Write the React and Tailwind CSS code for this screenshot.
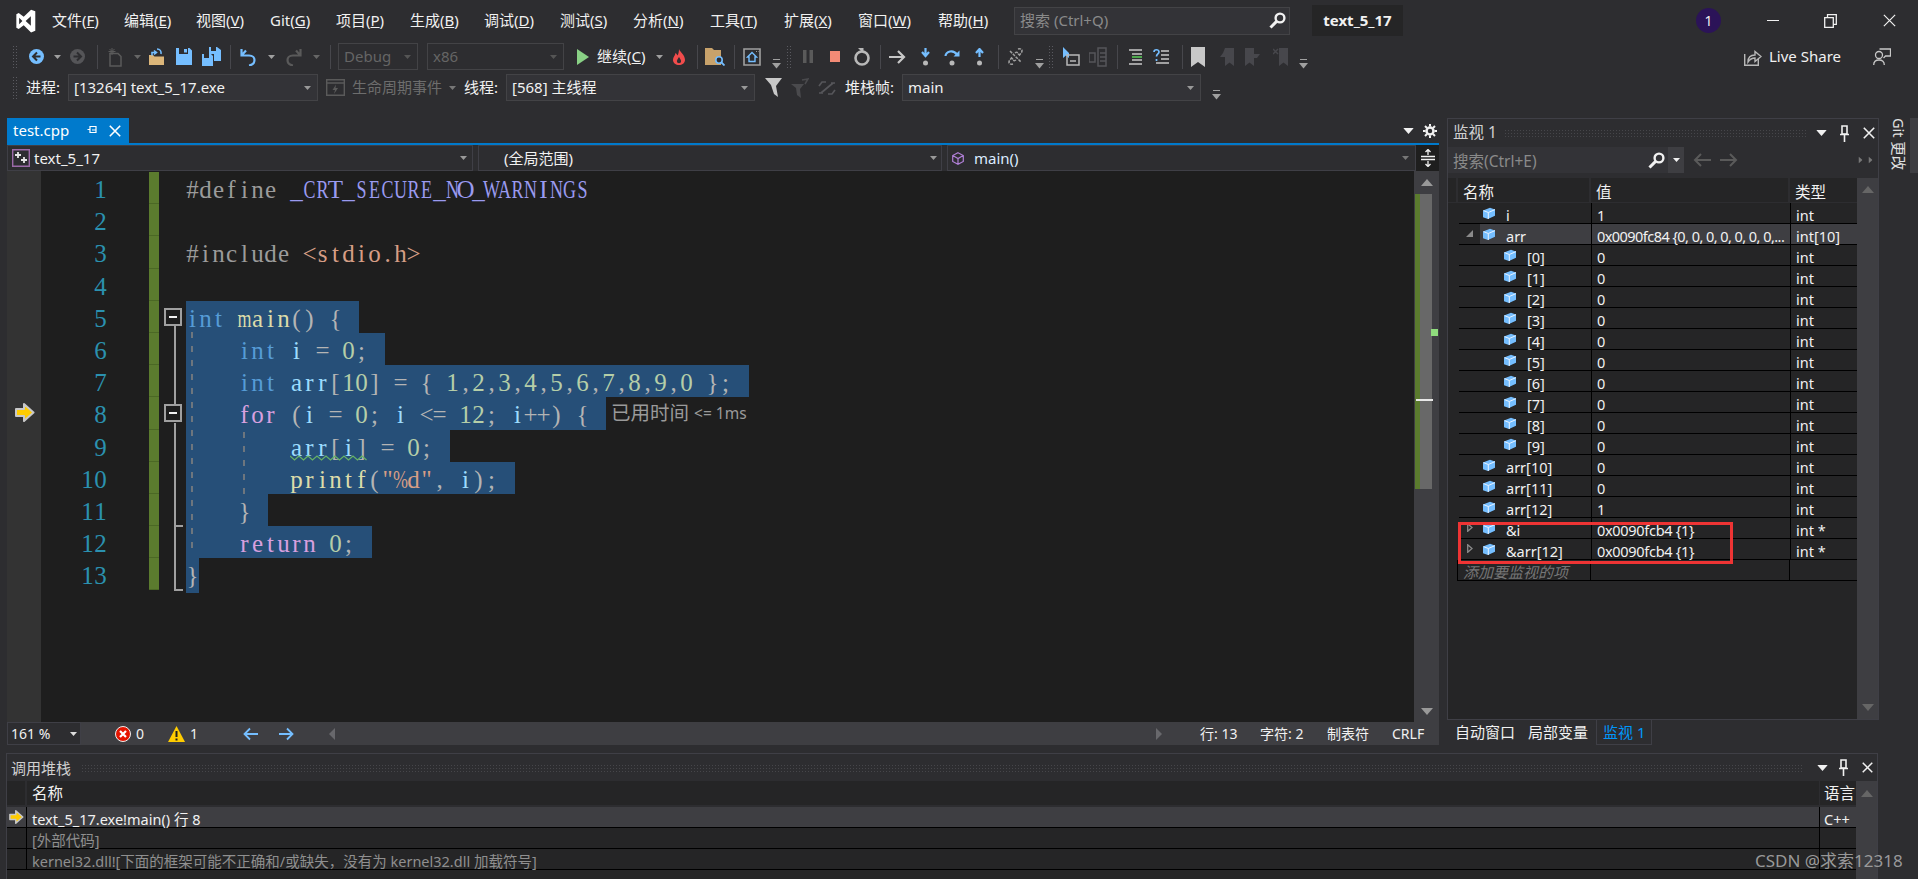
import React from 'react';

const Caret = ({ c = '#a0a0a0', cls = '' }) => (
  <svg width="7" height="4" viewBox="0 0 7 4" className={'shrink-0 ' + cls}><path d="M0 0h7L3.5 4z" fill={c} /></svg>
);
const Drop = ({ cls = '' }) => (
  <svg width="9" height="10" viewBox="0 0 9 10" className={'shrink-0 mt-[14px] ' + cls}><path d="M1 .5h7" stroke="#a0a0a0" /><path d="M0 4h9L4.5 9.5z" fill="#a0a0a0" /></svg>
);
const Grip = ({ cls = '' }) => (
  <div className={'shrink-0 w-[6px] h-[24px] bg-[radial-gradient(#5a5a60_1px,transparent_1px)] bg-[length:3px_3px] ' + cls} />
);
const Sep = ({ cls = '' }) => <div className={'shrink-0 w-px h-[24px] bg-[#47474c] ' + cls} />;
const Ico = ({ w, h, vb, cls = '', children }) => (
  <svg width={w} height={h} viewBox={vb || `0 0 ${w} ${h}`} className={'shrink-0 ' + cls} fill="none">{children}</svg>
);

const Cube = ({ cls = '' }) => (
  <svg width="14" height="13" viewBox="0 0 14 13" className={'shrink-0 ' + cls}>
    <path d="M1 3.5 8 .8l5 1.6v6.4L6 12 1 10.2z" fill="#75beff" />
    <path d="M1.5 3.6 6.3 5.5 13 2.6M6.3 5.5V12" stroke="#e8f3ff" strokeWidth="1" fill="none" />
  </svg>
);
const Arrow = ({ cls = '', w = 20, h = 19 }) => (
  <svg width={w} height={h} viewBox="0 0 20 19" className={'shrink-0 ' + cls}>
    <path d="M1 6h8V1l9.5 8.5L9 18v-5H1z" fill="#ffcc00" stroke="#c8c8c8" strokeWidth="2" strokeLinejoin="round" />
  </svg>
);
const PinIcon = ({ cls = '' }) => (
  <svg width="11" height="17" viewBox="0 0 11 17" className={'shrink-0 ' + cls} fill="none">
    <path d="M3 1h5v8H3z" stroke="#f1f1f1" strokeWidth="1.6" /><path d="M1 9.5h9M5.5 10v7" stroke="#f1f1f1" strokeWidth="1.6" />
  </svg>
);
const XIcon = ({ cls = '', s = 12, c = '#f1f1f1', sw = 1.6 }) => (
  <svg width={s} height={s} viewBox="0 0 12 12" className={'shrink-0 ' + cls}><path d="M.8.8l10.4 10.4M11.2.8.8 11.2" stroke={c} strokeWidth={sw} /></svg>
);
const Lens = ({ cls = '' }) => (
  <svg width="17" height="17" viewBox="0 0 17 17" className={'shrink-0 ' + cls} fill="none">
    <circle cx="11" cy="6" r="4.4" stroke="#f1f1f1" strokeWidth="2.4" /><path d="M7.6 9.4 1.5 15.5" stroke="#f1f1f1" strokeWidth="3" />
  </svg>
);

const menu = [
  ['文件(', 'F', ')', 'w-[72px]'], ['编辑(', 'E', ')', 'w-[72px]'], ['视图(', 'V', ')', 'w-[74px]'], ['Git(', 'G', ')', 'w-[66px]'],
  ['项目(', 'P', ')', 'w-[74px]'], ['生成(', 'B', ')', 'w-[74px]'], ['调试(', 'D', ')', 'w-[76px]'], ['测试(', 'S', ')', 'w-[73px]'],
  ['分析(', 'N', ')', 'w-[77px]'], ['工具(', 'T', ')', 'w-[74px]'], ['扩展(', 'X', ')', 'w-[74px]'], ['窗口(', 'W', ')', 'w-[80px]'], ['帮助(', 'H', ')', 'w-[76px]'],
];

const C = {
  kw: 'text-[#569cd6]', fn: 'text-[#dcdcaa]', v: 'text-[#9cdcfe]', n: 'text-[#b5cea8]', p: 'text-[#b4b4b4]',
  pre: 'text-[#9b9b9b]', mac: 'text-[#9a9af0]', str: 'text-[#d69d85]', ctl: 'text-[#d8a0df]',
};
const WIDE = 'WMNRCUSEGA%m';
const Glyph = ({ ch }) => (
  <span className={WIDE.includes(ch) ? 'inline-flex justify-center w-[13px] scale-x-[0.72]' : 'inline-flex justify-center w-[13px]'}>{ch === ' ' ? '\u00a0' : ch}</span>
);
const Mono = ({ text, cls = '' }) => <span className={'inline-flex whitespace-pre ' + cls}>{[...text].map((ch, i) => <Glyph key={i} ch={ch} />)}</span>;

const lines = [
  { t: [['#define ', C.pre], ['_CRT_SECURE_NO_WARNINGS', C.mac]] },
  { t: [] },
  { t: [['#include ', C.pre], ['<stdio.h>', C.str]] },
  { t: [] },
  { sel: 1, box: 1, t: [['int', C.kw], [' ', C.p], ['main', C.fn], ['() {', C.p]] },
  { sel: 1, t: [['    ', C.p], ['int', C.kw], [' ', C.p], ['i', C.v], [' = ', C.p], ['0', C.n], [';', C.p]] },
  { sel: 1, t: [['    ', C.p], ['int', C.kw], [' ', C.p], ['arr', C.v], ['[', C.p], ['10', C.n], ['] = { ', C.p], ['1', C.n], [',', C.p], ['2', C.n], [',', C.p], ['3', C.n], [',', C.p], ['4', C.n], [',', C.p], ['5', C.n], [',', C.p], ['6', C.n], [',', C.p], ['7', C.n], [',', C.p], ['8', C.n], [',', C.p], ['9', C.n], [',', C.p], ['0', C.n], [' };', C.p]] },
  { sel: 1, box: 1, hint: 1, t: [['    ', C.p], ['for', C.ctl], [' (', C.p], ['i', C.v], [' = ', C.p], ['0', C.n], ['; ', C.p], ['i', C.v], [' <= ', C.p], ['12', C.n], ['; ', C.p], ['i', C.v], ['++) {', C.p]] },
  { sel: 1, t: [['        ', C.p], ['arr', C.v], ['[', C.p], ['i', C.v], ['] = ', C.p], ['0', C.n], [';', C.p]] },
  { sel: 1, t: [['        ', C.p], ['printf', C.fn], ['(', C.p], ['"%d"', C.str], [', ', C.p], ['i', C.v], [');', C.p]] },
  { sel: 1, t: [['    }', C.p]] },
  { sel: 1, t: [['    ', C.p], ['return', C.ctl], [' ', C.p], ['0', C.n], [';', C.p]] },
  { sel: 2, t: [['}', C.p]] },
];

const watch = [
  { n: 'i', v: '1', ty: 'int' },
  { n: 'arr', v: '0x0090fc84 {0, 0, 0, 0, 0, 0, 0,...', ty: 'int[10]', exp: 'open', selected: 1 },
  ...[0, 1, 2, 3, 4, 5, 6, 7, 8, 9].map((k) => ({ n: `[${k}]`, v: '0', ty: 'int', sub: 1 })),
  { n: 'arr[10]', v: '0', ty: 'int' },
  { n: 'arr[11]', v: '0', ty: 'int' },
  { n: 'arr[12]', v: '1', ty: 'int' },
  { n: '&i', v: '0x0090fcb4 {1}', ty: 'int *', exp: 'closed' },
  { n: '&arr[12]', v: '0x0090fcb4 {1}', ty: 'int *', exp: 'closed' },
];

const Combo = ({ w, text, dim }) => (
  <div className={`shrink-0 flex items-center h-[27px] border ${w} ${dim ? 'border-[#434346] text-[#656565]' : 'border-[#434346] bg-[#333337] text-[#f1f1f1]'}`}>
    <span className="pl-[5px] flex-1 whitespace-pre">{text}</span>
    <Caret c={dim ? '#555555' : '#999999'} cls="mr-[6px]" />
  </div>
);

function Title() {
  return (
    <div className="flex items-center h-[41px] shrink-0 text-[15px]">
      <svg width="26" height="26" viewBox="0 0 24 24" className="ml-[12px] shrink-0">
        <path fill="#ffffff" fillRule="evenodd" d="M17.6 1.5 10.8 8 6.2 4.6 4 5.7v12.6l2.2 1.1 4.6-3.4 6.8 6.5L21.5 21V3zM6.6 9l3 3-3 3zM17.4 7.6v8.8L12.6 12z" />
      </svg>
      <div className="flex ml-[14px]">
        {menu.map(([a, b, c, w]) => (
          <span key={b} className={`${w} text-[#f1f1f1] whitespace-pre`}>{a}<u>{b}</u>{c}</span>
        ))}
      </div>
      <div className="flex items-center justify-between w-[276px] h-[28px] border border-[#434346] bg-[#333337] pl-[5px] pr-[3px] text-[#8a8a8a]">
        <span>搜索 (Ctrl+Q)</span><Lens />
      </div>
      <div className="ml-[22px] flex items-center justify-center w-[91px] h-[31px] bg-[#252526] font-bold text-[#f1f1f1]">text_5_17</div>
      <div className="ml-[293px] flex items-center justify-center w-[25px] h-[25px] rounded-full bg-[#2b1358] text-[#f1f1f1] text-[14px]">1</div>
      <div className="ml-[46px] w-[12px] h-px bg-[#f1f1f1]" />
      <svg width="13" height="14" viewBox="0 0 13 14" className="ml-[45px] shrink-0" fill="none"><path d="M.7 3.7h8.6v9.6H.7zM3.5 3.5V.7h8.8v9.6H9.5" stroke="#f1f1f1" strokeWidth="1.3" /></svg>
      <XIcon s={13} sw={1.1} cls="ml-[46px]" />
    </div>
  );
}

function Toolbar1() {
  return (
    <div className="flex items-center h-[31px] shrink-0 text-[15px] text-[#f1f1f1]">
      <Grip cls="ml-[12px]" />
      <Ico w={15} h={15} cls="ml-[11px]"><circle cx="7.5" cy="7.5" r="7.5" fill="#75beff" /><path d="M8 3.5 4 7.5l4 4M4.5 7.5h7" stroke="#2d2d30" strokeWidth="2" /></Ico>
      <Caret cls="ml-[10px]" />
      <Ico w={15} h={15} cls="ml-[9px]"><circle cx="7.5" cy="7.5" r="7.5" fill="#555558" /><path d="m7 3.5 4 4-4 4M3.5 7.5h7" stroke="#2d2d30" strokeWidth="2" /></Ico>
      <Sep cls="ml-[12px]" />
      <Ico w={16} h={20} cls="ml-[9px]"><path d="M3 6.5h8l3 3v9.5H3z" stroke="#5a5a5a" strokeWidth="1.5" /><path d="M5 1v7M1.5 4.5h7M2.5 2l5 5M7.5 2l-5 5" stroke="#5a5a5a" /></Ico>
      <Caret c="#666" cls="ml-[11px]" />
      <Ico w={18} h={18} cls="ml-[7px]"><path d="M1 7h4l1.500 1.500H16V17H1z" fill="#dcb67a" /><path d="M4 7.500V4.500h4M6 2.500l2.500 2L6 6.500" stroke="#75beff" strokeWidth="1.600" /><path d="M9 1c3 0 4.500 2 4 5" stroke="#75beff" strokeWidth="1.600" /></Ico>
      <Ico w={16} h={17} cls="ml-[10px]"><path d="M0 0h3v6h9V0h1.500L16 2.500V17H0z" fill="#75beff" /><path d="M8 1h3v3.500H8z" fill="#75beff" /></Ico>
      <Ico w={19} h={19} cls="ml-[10px]"><path d="M7 0h2v4h5V0h1l4 3v11h-7V7H7z" fill="#75beff" /><path d="M0 7h2v4h5V7h2l2 2v10H0z" fill="#75beff" /></Ico>
      <Sep cls="ml-[9px]" />
      <Ico w={16} h={18} cls="ml-[9px]"><path d="M1.500 1v6.500H9c4 0 5.500 2.500 5.500 4.500 0 3-2.500 5-5.500 5.500M1.500 7.500 6 2.500" stroke="#75beff" strokeWidth="2.200" /></Ico>
      <Caret cls="ml-[12px]" />
      <Ico w={16} h={18} cls="ml-[11px]"><path d="M14.500 1v6.500H7C3 7.500 1.500 10 1.500 12c0 3 2.500 5 5.500 5.500M14.500 7.500 10 2.500" stroke="#5a5a5a" strokeWidth="2.200" /></Ico>
      <Caret c="#666" cls="ml-[11px]" />
      <Sep cls="ml-[10px]" />
      <div className="ml-[7px]"><Combo w="w-[80px]" text="Debug" dim /></div>
      <div className="ml-[9px]"><Combo w="w-[137px]" text="x86" dim /></div>
      <Ico w={12} h={16} cls="ml-[13px]"><path d="M0 0l12 8-12 8z" fill="#89d185" /></Ico>
      <span className="ml-[8px] w-[52px] whitespace-pre">继续(<u>C</u>)</span>
      <Caret cls="ml-[7px]" />
      <Ico w={12} h={16} cls="ml-[10px]"><path d="M6 0c1 3 6 6 6 11 0 3-3 5-6 5s-6-2-6-5c0-3 2-4 2.500-7C4 5 4 6 4.500 6.500 5.500 5 6 2 6 0z" fill="#f14c4c" /><path d="M6 8c1 2 2.500 3 2 5-.5 1.500-3.500 1.500-4 0C3.500 11 5 10 6 8z" fill="#2d2d30" /></Ico>
      <Sep cls="ml-[12px]" />
      <Ico w={20} h={19} cls="ml-[7px]"><path d="M0 1h7l2 2h7v15H0z" fill="#c8a26b" /><circle cx="14" cy="13" r="3.200" stroke="#75beff" strokeWidth="1.600" fill="#2d2d30" /><path d="m16.500 15.500 3 3" stroke="#75beff" strokeWidth="1.800" /></Ico>
      <Sep cls="ml-[9px]" />
      <Ico w={18} h={18} cls="ml-[8px]"><path d="M1 1h16v16H1z" stroke="#a0a0a0" strokeWidth="1.600" /><path d="M9 4.500 4.500 9H6v4.500h6V9h1.500z" stroke="#75beff" strokeWidth="1.400" /><path d="M13 3.500h1M15 3.500h.5" stroke="#a0a0a0" /></Ico>
      <Drop cls="ml-[11px]" />
      <Grip cls="ml-[5px]" />
      <Ico w={10} h={13} cls="ml-[11px]"><path d="M0 0h3.500v13H0zM6.500 0H10v13H6.500z" fill="#5a5a5a" /></Ico>
      <div className="ml-[17px] w-[10px] h-[11px] bg-[#f38b76] shrink-0" />
      <Ico w={16} h={18} cls="ml-[14px]"><circle cx="8" cy="10" r="6.500" stroke="#b8b8b8" strokeWidth="2.600" /><path d="M4 0h5.500v5.500z" fill="#b8b8b8" /></Ico>
      <Sep cls="ml-[10px]" />
      <Ico w={17} h={14} cls="ml-[8px]"><path d="M0 7h15M9 1l6 6-6 6" stroke="#c8c8c8" strokeWidth="2.200" /></Ico>
      <Ico w={9} h={18} cls="ml-[15px]"><path d="M4.500 0v7M1 4l3.500 4L8 4" stroke="#75beff" strokeWidth="2.200" /><circle cx="4.500" cy="15" r="2.500" fill="#b8b8b8" /></Ico>
      <Ico w={16} h={18} cls="ml-[14px]"><path d="M1.500 8C2 3.500 9 1 13 6.500" stroke="#75beff" strokeWidth="2.200" /><path d="M15.500 2.500v6h-6z" fill="#75beff" /><circle cx="8" cy="15" r="2.500" fill="#b8b8b8" /></Ico>
      <Ico w={9} h={18} cls="ml-[15px]"><path d="M4.500 9V2M1 5l3.500-4L8 5" stroke="#75beff" strokeWidth="2.200" /><circle cx="4.500" cy="15" r="2.500" fill="#b8b8b8" /></Ico>
      <Sep cls="ml-[14px]" />
      <Ico w={17} h={19} cls="ml-[8px]"><path d="M11 2c3-1 5 1 3.500 3.500l-3 4M6 17c-3 1-5-1-3.500-3.500l3-4M8 6c2-1.500 4 0 3.500 2M9 13c-2 1.500-4 0-3.500-2M3 4l11 11" stroke="#a0a0a0" strokeWidth="1.500" strokeDasharray="3 1" /></Ico>
      <Drop cls="ml-[11px]" />
      <Grip cls="ml-[4px]" />
      <Ico w={17} h={20} cls="ml-[9px]"><path d="M0 0v11l3-2.500L6 11V6z" fill="#75beff" /><path d="M4 8h12v10H4zM7 14h6" stroke="#b8b8b8" strokeWidth="1.500" /></Ico>
      <Ico w={18} h={20} cls="ml-[9px]"><path d="M0 6h6v9H0zM9 1h8v18H9zM11 6h6M11 10h6M11 14h6" stroke="#55555a" strokeWidth="1.500" /></Ico>
      <Sep cls="ml-[10px]" />
      <Ico w={13} h={16} cls="ml-[11px]"><path d="M0 1h13M3 5h10M3 11h10M0 15h13" stroke="#c8c8c8" strokeWidth="1.500" /><path d="M3 7h10v2H3z" fill="#4ea84e" /></Ico>
      <Ico w={16} h={17} cls="ml-[11px]"><path d="M1 4c0-3 5-3 5 0 0 2-2.500 2-2.500 4.500M3.500 11v2" stroke="#75beff" strokeWidth="1.700" /><path d="M8 3h8M8 7h8M8 11h8M3 15h13" stroke="#c8c8c8" strokeWidth="1.500" /></Ico>
      <Sep cls="ml-[13px]" />
      <Ico w={14} h={20} cls="ml-[8px]"><path d="M0 0h14v20l-7-5-7 5z" fill="#c8c8c8" /></Ico>
      <Ico w={14} h={18} cls="ml-[15px]"><path d="M5 0h9v18l-4.500-3.500L5 18V9H0l3-4z" fill="#47474c" /></Ico>
      <Ico w={15} h={18} cls="ml-[11px]"><path d="M0 0h9v6h6l-3 4H9v8l-4.500-3.500L0 18z" fill="#47474c" /></Ico>
      <Ico w={15} h={18} cls="ml-[13px]"><path d="M0 1l5 5M5 1 0 6" stroke="#47474c" strokeWidth="1.500" /><path d="M6 0h9v18l-4.500-3.500L6 18z" fill="#47474c" /></Ico>
      <Drop cls="ml-[11px]" />
      <div className="ml-auto flex items-center pr-[27px]">
        <Ico w={18} h={18}><path d="M.7 6v11.300h13.600V11" stroke="#b8b8b8" strokeWidth="1.400" /><path d="M4 14c0-5 3-7 7-7V3.500l6 5-6 5V10c-3 0-5 1-7 4z" stroke="#b8b8b8" strokeWidth="1.400" /></Ico>
        <span className="ml-[7px] w-[74px] whitespace-nowrap">Live Share</span>
        <Ico w={18} h={18} cls="ml-[30px]"><circle cx="6" cy="7" r="3.500" stroke="#c8c8c8" strokeWidth="1.300" /><path d="M.7 17c0-3.500 2-5 5.300-5s5.300 1.500 5.300 5M6.500 1h11v7h-5l-2 2" stroke="#c8c8c8" strokeWidth="1.300" /></Ico>
      </div>
    </div>
  );
}

function Toolbar2() {
  return (
    <div className="flex items-center h-[31px] shrink-0 text-[15px] text-[#f1f1f1]">
      <Grip cls="ml-[12px]" />
      <span className="ml-[8px] w-[34px] whitespace-nowrap">进程:</span>
      <div className="ml-[8px]"><Combo w="w-[250px]" text="[13264] text_5_17.exe" /></div>
      <Ico w={19} h={17} cls="ml-[8px]"><path d="M.7.7h17.600v15.600H.7zM.7 4h17.600" stroke="#5a5a5a" strokeWidth="1.400" /><path d="M10 5.500 6.500 11H9l-1 4 4-6H9.500z" fill="#5a5a5a" /></Ico>
      <span className="ml-[7px] w-[91px] whitespace-nowrap text-[#6d6d6d]">生命周期事件</span>
      <Caret c="#777" cls="ml-[6px]" />
      <span className="ml-[8px] w-[34px] whitespace-nowrap">线程:</span>
      <div className="ml-[8px]"><Combo w="w-[249px]" text="[568] 主线程" /></div>
      <Ico w={17} h={20} cls="ml-[10px]"><path d="M0 0h17l-6 8 2 11-4-3-3-9z" fill="#c8c8c8" /></Ico>
      <Ico w={18} h={20} cls="ml-[9px]"><path d="M0 6h13l-4 5 1 9-4-3-1-7z" fill="#4a4a4d" /><path d="M11 2l6-1-3 5" stroke="#4a4a4d" strokeWidth="1.500" /></Ico>
      <Ico w={18} h={14} cls="ml-[9px]"><path d="M1 5l3-4h4M17 9l-3 4h-4M3 12 15 2M1 12h4M13 2h4" stroke="#56565a" strokeWidth="1.700" /></Ico>
      <span className="ml-[9px] w-[49px] whitespace-nowrap">堆栈帧:</span>
      <div className="ml-[8px]"><Combo w="w-[299px]" text="main" /></div>
      <Drop cls="ml-[11px]" />
    </div>
  );
}

function DocTabs() {
  return (
    <div className="flex items-end h-[25px] shrink-0">
      <div className="flex items-center w-[122px] h-full bg-[#007acc] text-white text-[15px]">
        <span className="pl-[6px] w-[80px]">test.cpp</span>
        <Ico w={11} h={11}><path d="M3 1.500h6v6H3M.5 4.500H3M3 1v7M9 5H5" stroke="#fff" strokeWidth="1.200" /></Ico>
        <XIcon s={12} c="#fff" cls="ml-[11px]" />
      </div>
      <div className="ml-auto self-center flex items-center gap-[11px] pr-[2px]">
        <Caret c="#f1f1f1" cls="scale-150" />
        <svg width="14" height="14" viewBox="0 0 14 14" className="shrink-0"><circle cx="7" cy="7" r="3.500" fill="none" stroke="#f1f1f1" strokeWidth="2.500" /><path d="M7 0v2.500M7 11.500V14M0 7h2.500M11.500 7H14M2 2l2 2M10 10l2 2M12 2l-2 2M4 10l-2 2" stroke="#f1f1f1" strokeWidth="2" /></svg>
      </div>
    </div>
  );
}

function NavBar() {
  return (
    <div className="flex h-[26px] shrink-0 text-[15px] text-[#f1f1f1]">
      <div className="flex items-center w-[466px] border border-[#3f3f46] bg-[#2d2d30]">
        <Ico w={18} h={18} cls="ml-[4px]"><path d="M.7.7h16.600v16.600H.7z" stroke="#9c6aa8" strokeWidth="1.400" /><path d="M6 3v6M3 6h6M12 8v6M9 11h6" stroke="#e6e6e6" strokeWidth="1.800" /></Ico>
        <span className="ml-[4px] flex-1">text_5_17</span>
        <Caret c="#999" cls="mr-[5px]" />
      </div>
      <div className="flex items-center w-[464px] ml-[5px] border border-[#3f3f46] bg-[#2d2d30]">
        <span className="ml-[25px] flex-1">(全局范围)</span>
        <Caret c="#999" cls="mr-[4px]" />
      </div>
      <div className="flex items-center flex-1 ml-[5px] border border-[#3f3f46] bg-[#2d2d30]">
        <Ico w={12} h={13} cls="ml-[4px]"><path d="M6 .7 11.300 3.500v6L6 12.300.7 9.500v-6zM.7 3.500 6 6.500l5.300-3M6 6.500v5.800" stroke="#b180d7" strokeWidth="1.200" /></Ico>
        <span className="ml-[10px] flex-1 text-[#dcebff]">main()</span>
        <Caret c="#777" cls="mr-[6px]" />
      </div>
      <div className="flex items-center justify-center w-[23px] bg-[#1e1e1e] shrink-0">
        <Ico w={14} h={18}><path d="M0 7.500h14M0 10.500h14M7 0v6M4.500 3 7 .5 9.500 3M7 12v6M4.500 15 7 17.500 9.500 15" stroke="#f1f1f1" strokeWidth="1.300" /></Ico>
      </div>
    </div>
  );
}

function CodeLine({ l, i }) {
  return (
    <div className="flex h-[32.2px] shrink-0 items-stretch text-[25px] leading-[36px] [font-family:'Liberation_Serif',serif]">
      <div className="w-[66px] flex justify-end text-[#2b91af]"><Mono text={String(i + 1)} /></div>
      <div className="w-[42px] shrink-0" />
      <div className="w-[10px] shrink-0 bg-[#5b7b2e] border-b border-[#4b6825]" />
      <div className="w-[27px] shrink-0 flex items-center pl-[5px]">
        {l.box && (
          <div className="w-[18px] h-[18px] border-2 border-[#a0a0a0] flex items-center justify-center">
            <div className="w-[8px] h-[2px] bg-[#f1f1f1]" />
          </div>
        )}
      </div>
      <div className={'flex ' + (l.sel === 1 ? 'bg-[#264f78] pr-[17px]' : l.sel === 2 ? 'bg-[#264f78] self-start h-[35px]' : '')}>
        {l.t.map(([s, c], k) => <Mono key={k} text={s} cls={c} />)}
      </div>
      {l.hint && (
        <div className="flex items-center pl-[5px] [font-family:'Noto_Sans','Noto_Sans_CJK_SC',sans-serif] text-[#9a9a9a] whitespace-pre">
          <span className="text-[19.500px]">已用时间</span><span className="ml-[5px] text-[15.500px]">{'<= 1ms'}</span>
        </div>
      )}
    </div>
  );
}

function Editor() {
  return (
    <div className="flex flex-1 min-h-0 bg-[#1e1e1e]">
      <div className="w-[34px] shrink-0 bg-[#333333] relative">
        <Arrow cls="absolute left-[8px] top-[232px]" />
      </div>
      <div className="flex-1 relative flex flex-col pt-px">
        {lines.map((l, i) => <CodeLine key={i} l={l} i={i} />)}
        <div className="absolute left-[133px] top-[155px] w-[2px] h-[78px] bg-[#a0a0a0]" />
        <div className="absolute left-[133px] top-[252px] w-[2px] h-[168px] bg-[#a0a0a0]" />
        <div className="absolute left-[133px] top-[354px] w-[9px] h-[2px] bg-[#a0a0a0]" />
        <div className="absolute left-[133px] top-[418px] w-[9px] h-[2px] bg-[#a0a0a0]" />
        <svg width="2" height="224" className="absolute left-[150px] top-[161px]"><path d="M1 0v224" stroke="#808080" strokeWidth="1.600" strokeDasharray="6 8" /></svg>
        <svg width="2" height="62" className="absolute left-[202px] top-[261px]"><path d="M1 0v62" stroke="#808080" strokeWidth="1.600" strokeDasharray="6 8" /></svg>
        <svg width="78" height="6" viewBox="0 0 78 6" className="absolute left-[249px] top-[284px]" fill="none"><path d="M0 1l4.500 4 4.500-4 4.500 4 4.500-4 4.500 4 4.500-4 4.500 4 4.500-4 4.500 4 4.500-4 4.500 4 4.500-4 4.500 4 4.500-4 4.500 4 4.500-4 4.500 4" stroke="#66b266" strokeWidth="1.300" /></svg>
      </div>
      <div className="w-[25px] shrink-0 bg-[#3e3e42] relative flex flex-col items-center">
        <div className="h-[23px] flex items-center justify-center shrink-0"><svg width="12" height="7" viewBox="0 0 12 7"><path d="M0 7 6 0l6 7z" fill="#999" /></svg></div>
        <div className="w-[17px] h-[295px] bg-[#686868] mr-[6px]"><div className="w-[5px] h-full bg-[#5b7b2e]" /></div>
        <div className="flex-1" />
        <div className="h-[22px] flex items-center justify-center shrink-0"><svg width="12" height="7" viewBox="0 0 12 7"><path d="M0 0h12L6 7z" fill="#999" /></svg></div>
        <div className="absolute left-[2px] top-[228px] w-[17px] h-[2px] bg-[#e8e8e8]" />
        <div className="absolute left-[17px] top-[158px] w-[7px] h-[7px] bg-[#8fdc7d]" />
      </div>
    </div>
  );
}

function Status() {
  return (
    <div className="flex items-center h-[23px] shrink-0 bg-[#3e3e42] text-[14px] text-[#f1f1f1]">
      <div className="flex items-center w-[74px] h-full bg-[#2d2d30] border border-[#3f3f46]">
        <span className="pl-[3px] flex-1">161 %</span><Caret c="#ddd" cls="mr-[3px]" />
      </div>
      <Ico w={16} h={16} cls="ml-[34px]"><circle cx="8" cy="8" r="7.500" fill="#e51400" stroke="#eee" strokeWidth="1" /><path d="m5 5 6 6M11 5l-6 6" stroke="#fff" strokeWidth="2.200" /></Ico>
      <span className="ml-[5px] w-[12px]">0</span>
      <Ico w={17} h={16} cls="ml-[20px]"><path d="M8.500 0 17 16H0z" fill="#ffcc00" /><path d="M8.500 5v6M8.500 12.500v2" stroke="#1e1e1e" strokeWidth="2" /></Ico>
      <span className="ml-[5px] w-[12px]">1</span>
      <Ico w={15} h={14} cls="ml-[41px]"><path d="M15 7H2M7 1.500 1.500 7 7 12.500" stroke="#75beff" strokeWidth="1.800" /></Ico>
      <Ico w={15} h={14} cls="ml-[21px]"><path d="M0 7h13M8 1.500 13.500 7 8 12.500" stroke="#75beff" strokeWidth="1.800" /></Ico>
      <svg width="6" height="12" viewBox="0 0 6 12" className="ml-[35px] shrink-0"><path d="M6 0v12L0 6z" fill="#68686c" /></svg>
      <svg width="6" height="12" viewBox="0 0 6 12" className="ml-[821px] shrink-0"><path d="M0 0v12l6-6z" fill="#68686c" /></svg>
      <span className="ml-[38px] w-[60px] whitespace-pre">行: 13</span>
      <span className="w-[67px] whitespace-pre">字符: 2</span>
      <span className="w-[65px] whitespace-pre">制表符</span>
      <span className="whitespace-pre">CRLF</span>
    </div>
  );
}

function WatchRow({ r }) {
  return (
    <div className="flex h-[21px] shrink-0">
      <div className="w-[11px] shrink-0" />
      <div className={'flex flex-1 border-b border-black ' + (r.selected ? 'bg-[#3e3e42]' : '')}>
        <div className="w-[133px] shrink-0 flex items-center border-r border-black bg-[#252526] relative">
          {r.selected && <div className="absolute left-[21px] right-0 top-0 bottom-0 bg-[#3e3e42]" />}
          {r.exp === 'open' && <svg width="7" height="7" viewBox="0 0 7 7" className="absolute left-[7px] top-[6px]"><path d="M7 0v7H0z" fill="#8a8a8a" /></svg>}
          {r.exp === 'closed' && <svg width="6" height="9" viewBox="0 0 6 9" className="absolute left-[8px] top-[5px]" fill="none"><path d="M.7.7 5 4.500.7 8.300z" stroke="#8a8a8a" strokeWidth="1.300" /></svg>}
          <div className={'relative flex items-center ' + (r.sub ? 'pl-[44px]' : 'pl-[23px]')}>
            <Cube />
            <span className="ml-[10px] pt-[6px] whitespace-pre">{r.n}</span>
          </div>
        </div>
        <div className={'w-[199px] shrink-0 flex items-center pl-[5px] pt-[6px] border-r border-black whitespace-pre ' + (r.selected ? 'tracking-[-0.55px]' : 'tracking-[-0.3px]')}>{r.v}</div>
        <div className="flex-1 flex items-center pl-[5px] pt-[6px] whitespace-pre">{r.ty}</div>
      </div>
    </div>
  );
}

function WatchPanel() {
  return (
    <div className="flex flex-col w-[432px] shrink-0 ml-[8px]">
      <div className="flex flex-col h-[602px] shrink-0 border border-[#3f3f46] relative">
        <div className="flex items-center h-[28px] shrink-0 text-[15.500px] text-[#d0d0d0]">
          <span className="pl-[5px] w-[56px]">监视 1</span>
          <div className="w-[302px] h-[8px] bg-[radial-gradient(#46464a_1px,transparent_1px)] bg-[length:3px_3px]" />
          <Caret c="#f1f1f1" cls="ml-[12px] scale-150" />
          <PinIcon cls="ml-[14px]" />
          <XIcon cls="ml-[13px]" />
        </div>
        <div className="flex items-center h-[26px] shrink-0">
          <div className="flex items-center w-[220px] h-full bg-[#333337] pl-[5px] pr-[3px] justify-between text-[15.500px] text-[#8a8a8a]">
            <span className="pt-[4px]">搜索(Ctrl+E)</span><Lens />
          </div>
          <div className="flex items-center justify-center w-[16px] h-full bg-[#3e3e42]"><Caret c="#f1f1f1" /></div>
          <Ico w={18} h={14} cls="ml-[9px]"><path d="M18 7H2M8 1 2 7l6 6" stroke="#5a5a5a" strokeWidth="2" /></Ico>
          <Ico w={18} h={14} cls="ml-[9px]"><path d="M0 7h16M10 1l6 6-6 6" stroke="#5a5a5a" strokeWidth="2" /></Ico>
          <div className="ml-auto mr-[4px] flex gap-[3px] text-[#888]"><Caret c="#777" cls="rotate-[-90deg]" /><Caret c="#777" cls="rotate-[-90deg]" /></div>
        </div>
        <div className="h-[5px] shrink-0" />
        <div className="flex-1 flex min-h-0 bg-[#252526]">
          <div className="flex-1 flex flex-col text-[14.500px] text-[#f1f1f1] relative">
            <div className="flex h-[25px] shrink-0 border-b border-[#2d2d30] text-[15.500px]">
              <div className="w-[10px] shrink-0 border-r-2 border-[#2d2d30]" />
              <div className="w-[133px] shrink-0 flex items-center pl-[5px] pt-[5px] border-r-2 border-[#2d2d30]">名称</div>
              <div className="w-[199px] shrink-0 flex items-center pl-[5px] pt-[5px] border-r-2 border-[#2d2d30]">值</div>
              <div className="flex-1 flex items-center pl-[5px] pt-[5px]">类型</div>
            </div>
            {watch.map((r) => <WatchRow key={r.n} r={r} />)}
            <div className="flex h-[21px] shrink-0 text-[15px]">
              <div className="w-[10px] shrink-0 border-r border-black" />
              <div className="flex flex-1 border-b border-black">
                <div className="w-[133px] shrink-0 flex items-center pl-[5px] pt-[4px] border-r border-black italic text-[#767676] whitespace-nowrap">添加要监视的项</div>
                <div className="w-[199px] shrink-0 border-r border-black" />
              </div>
            </div>
            <div className="absolute left-[10px] top-[344px] w-[275px] h-[42px] border-[3px] border-[#ee3434]" />
          </div>
          <div className="w-[21px] shrink-0 bg-[#3e3e42] flex flex-col justify-between items-center py-[8px]">
            <svg width="12" height="7" viewBox="0 0 12 7"><path d="M0 7 6 0l6 7z" fill="#666" /></svg>
            <svg width="12" height="7" viewBox="0 0 12 7"><path d="M0 0h12L6 7z" fill="#666" /></svg>
          </div>
        </div>
      </div>
      <div className="flex items-center h-[25px] shrink-0 text-[15px] text-[#f1f1f1]">
        <span className="ml-[8px] w-[73px]">自动窗口</span>
        <span className="w-[68px]">局部变量</span>
        <span className="h-full flex items-center px-[6px] text-[#0097fb] border border-t-0 border-[#3f3f46] whitespace-pre">监视 1</span>
      </div>
    </div>
  );
}

function GitStrip() {
  return (
    <div className="ml-[9px] flex-1 flex items-start">
      <div className="w-[22px] text-[14.500px] text-[#e0e0e0] [writing-mode:vertical-rl] [text-orientation:sideways] whitespace-pre leading-[22px]">Git 更改</div>
      <div className="w-[8px] h-[55px] bg-[#3e3e42]" />
    </div>
  );
}

const stack = [
  ['text_5_17.exe!main() 行 8', 1, 'C++'],
  ['[外部代码]', 0, ''],
  ['kernel32.dll![下面的框架可能不正确和/或缺失，没有为 kernel32.dll 加载符号]', 0, ''],
];

function CallStack() {
  return (
    <div className="flex flex-col ml-[6px] w-[1872px] h-[126px] shrink-0 border border-b-0 border-[#3f3f46] text-[14.500px]">
      <div className="flex items-center h-[27px] shrink-0 text-[15px] text-[#d0d0d0]">
        <span className="pl-[4px] pt-[2px] w-[74px]">调用堆栈</span>
        <div className="w-[1723px] h-[8px] bg-[radial-gradient(#46464a_1px,transparent_1px)] bg-[length:3px_3px]" />
        <Caret c="#f1f1f1" cls="ml-[15px] scale-150" />
        <PinIcon cls="ml-[12px]" />
        <XIcon s={11} cls="ml-[13px]" />
      </div>
      <div className="flex-1 flex min-h-0 bg-[#252526]">
        <div className="flex-1 flex flex-col min-w-0">
          <div className="flex h-[26px] shrink-0 border-b-2 border-[#2d2d30] text-[15.500px] text-[#f1f1f1]">
            <div className="w-[20px] shrink-0 border-r-2 border-[#2d2d30]" />
            <div className="flex-1 flex items-center pl-[5px] pt-[2px]">名称</div>
            <div className="w-[37px] shrink-0 flex items-center pl-[4px] pt-[2px] border-l border-[#2d2d30] whitespace-nowrap">语言</div>
          </div>
          {stack.map(([t, on, lang]) => (
            <div key={t} className={'flex h-[21px] shrink-0 border-b border-black ' + (on ? 'bg-[#3e3e42] text-[#f1f1f1]' : 'text-[#8f8f8f]')}>
              <div className="w-[20px] shrink-0 flex items-center justify-center border-r border-black">{on === 1 && <Arrow w={15} h={14} />}</div>
              <div className="flex-1 flex items-center pl-[5px] pt-[5px] whitespace-pre">{t}</div>
              <div className="w-[37px] shrink-0 flex items-center pl-[4px] pt-[5px] border-l border-black text-[#f1f1f1]">{lang}</div>
            </div>
          ))}
        </div>
        <div className="w-[21px] shrink-0 bg-[#3e3e42] flex justify-center pt-[9px]">
          <svg width="12" height="7" viewBox="0 0 12 7"><path d="M0 7 6 0l6 7z" fill="#666" /></svg>
        </div>
      </div>
    </div>
  );
}

export default function App() {
  return (
    <div className="relative flex flex-col w-[1918px] h-[879px] overflow-hidden bg-[#2d2d30] text-[#f1f1f1] [font-family:'Noto_Sans','Noto_Sans_CJK_SC',sans-serif]">
      <Title />
      <Toolbar1 />
      <Toolbar2 />
      <div className="h-[15px] shrink-0" />
      <div className="flex h-[627px] shrink-0">
        <div className="flex flex-col w-[1432px] ml-[7px] shrink-0">
          <DocTabs />
          <div className="h-[2px] shrink-0 bg-[#007acc]" />
          <NavBar />
          <Editor />
          <Status />
        </div>
        <WatchPanel />
        <GitStrip />
      </div>
      <div className="h-[8px] shrink-0" />
      <CallStack />
      <div className="absolute left-[1755px] top-[848px] text-[17px] text-[#a8a8a8]/90 whitespace-pre">CSDN @求索12318</div>
    </div>
  );
}
